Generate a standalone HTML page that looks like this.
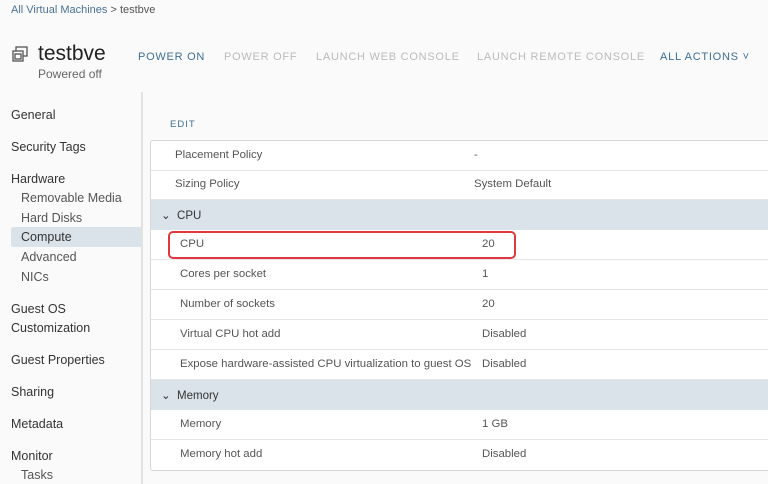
<!DOCTYPE html>
<html><head><style>
*{margin:0;padding:0;box-sizing:border-box}
body{width:768px;height:484px;overflow:hidden;background:#fafafa;font-family:"Liberation Sans",sans-serif;position:relative;color:#333}
.a{position:absolute;white-space:nowrap}
.bc{top:4px;left:11px;font-size:11px;color:#555}
.bc span{color:#4a7296}
.title{left:38px;top:42px;font-size:21px;color:#222}
.sub{left:38px;top:67px;font-size:12px;color:#666}
.act{top:51px;font-size:11px;letter-spacing:0.75px}
.side{font-size:12.5px;color:#333}
.sub2{font-size:12.5px;color:#555}
.div{left:141px;top:92px;width:2px;height:392px;background:#e2e2e2}
.tbl{position:absolute;left:150px;top:140px;width:630px;height:331px;background:#fff;border:1px solid #d7d7d7;border-radius:3px}
.row{position:absolute;left:0;width:630px;height:30px;border-bottom:1px solid #e6e6e6;font-size:11.4px;color:#555}
.row .l{position:absolute;top:8px}
.row .v{position:absolute;top:8px}
.hdr{background:#dbe3ea;color:#333;font-size:11.5px;border-bottom:none}
</style></head><body>
<div class="a bc"><span>All Virtual Machines</span> &gt; testbve</div>
<svg class="a" style="left:11px;top:45px" width="18" height="18" viewBox="0 0 18 18" fill="none" stroke="#555" stroke-width="1.3"><rect x="5" y="2" width="11" height="9"/><rect x="2" y="6" width="10" height="10" fill="#fafafa"/><rect x="4" y="9" width="6" height="5"/></svg>
<div class="a title">testbve</div>
<div class="a sub">Powered off</div>
<div class="a act" style="left:138px;color:#3f6f97">POWER ON</div>
<div class="a act" style="left:224px;color:#bbb">POWER OFF</div>
<div class="a act" style="left:316px;color:#bbb">LAUNCH WEB CONSOLE</div>
<div class="a act" style="left:477px;color:#bbb">LAUNCH REMOTE CONSOLE</div>
<div class="a act" style="left:660px;color:#3f6f97">ALL ACTIONS ˅</div>
<div class="a side" style="left:11px;top:108px">General</div>
<div class="a side" style="left:11px;top:140px">Security Tags</div>
<div class="a side" style="left:11px;top:172px">Hardware</div>
<div class="a sub2" style="left:21px;top:191px">Removable Media</div>
<div class="a sub2" style="left:21px;top:211px">Hard Disks</div>
<div class="a" style="left:11px;top:227px;width:130px;height:20px;background:#dbe3ea;border-radius:2px 0 0 2px"></div>
<div class="a sub2" style="left:21px;top:230px;color:#333">Compute</div>
<div class="a sub2" style="left:21px;top:250px">Advanced</div>
<div class="a sub2" style="left:21px;top:270px">NICs</div>
<div class="a side" style="left:11px;top:302px">Guest OS</div>
<div class="a side" style="left:11px;top:321px">Customization</div>
<div class="a side" style="left:11px;top:353px">Guest Properties</div>
<div class="a side" style="left:11px;top:385px">Sharing</div>
<div class="a side" style="left:11px;top:417px">Metadata</div>
<div class="a side" style="left:11px;top:449px">Monitor</div>
<div class="a sub2" style="left:21px;top:468px">Tasks</div>
<div class="a div"></div>
<div class="a" style="left:170px;top:119px;font-size:9.5px;letter-spacing:1px;color:#3f6f97">EDIT</div>
<div class="tbl">
<div class="row" style="top:0"><span class="l" style="left:24px">Placement Policy</span><span class="v" style="left:323px">-</span></div>
<div class="row" style="top:29px"><span class="l" style="left:24px">Sizing Policy</span><span class="v" style="left:323px">System Default</span></div>
<div class="row hdr" style="top:59px"><span class="l" style="left:10px">&#8964;&nbsp; CPU</span></div>
<div class="row" style="top:89px"><span class="l" style="left:29px">CPU</span><span class="v" style="left:331px">20</span></div>
<div class="row" style="top:119px"><span class="l" style="left:29px">Cores per socket</span><span class="v" style="left:331px">1</span></div>
<div class="row" style="top:149px"><span class="l" style="left:29px">Number of sockets</span><span class="v" style="left:331px">20</span></div>
<div class="row" style="top:179px"><span class="l" style="left:29px">Virtual CPU hot add</span><span class="v" style="left:331px">Disabled</span></div>
<div class="row" style="top:209px"><span class="l" style="left:29px">Expose hardware-assisted CPU virtualization to guest OS</span><span class="v" style="left:331px">Disabled</span></div>
<div class="row hdr" style="top:239px"><span class="l" style="left:10px">&#8964;&nbsp; Memory</span></div>
<div class="row" style="top:269px"><span class="l" style="left:29px">Memory</span><span class="v" style="left:331px">1 GB</span></div>
<div class="row" style="top:299px;border-bottom:none"><span class="l" style="left:29px">Memory hot add</span><span class="v" style="left:331px">Disabled</span></div>
</div>
<div class="a" style="left:168px;top:231px;width:348px;height:28px;border:2px solid #e0383e;border-radius:5px"></div>
</body></html>
